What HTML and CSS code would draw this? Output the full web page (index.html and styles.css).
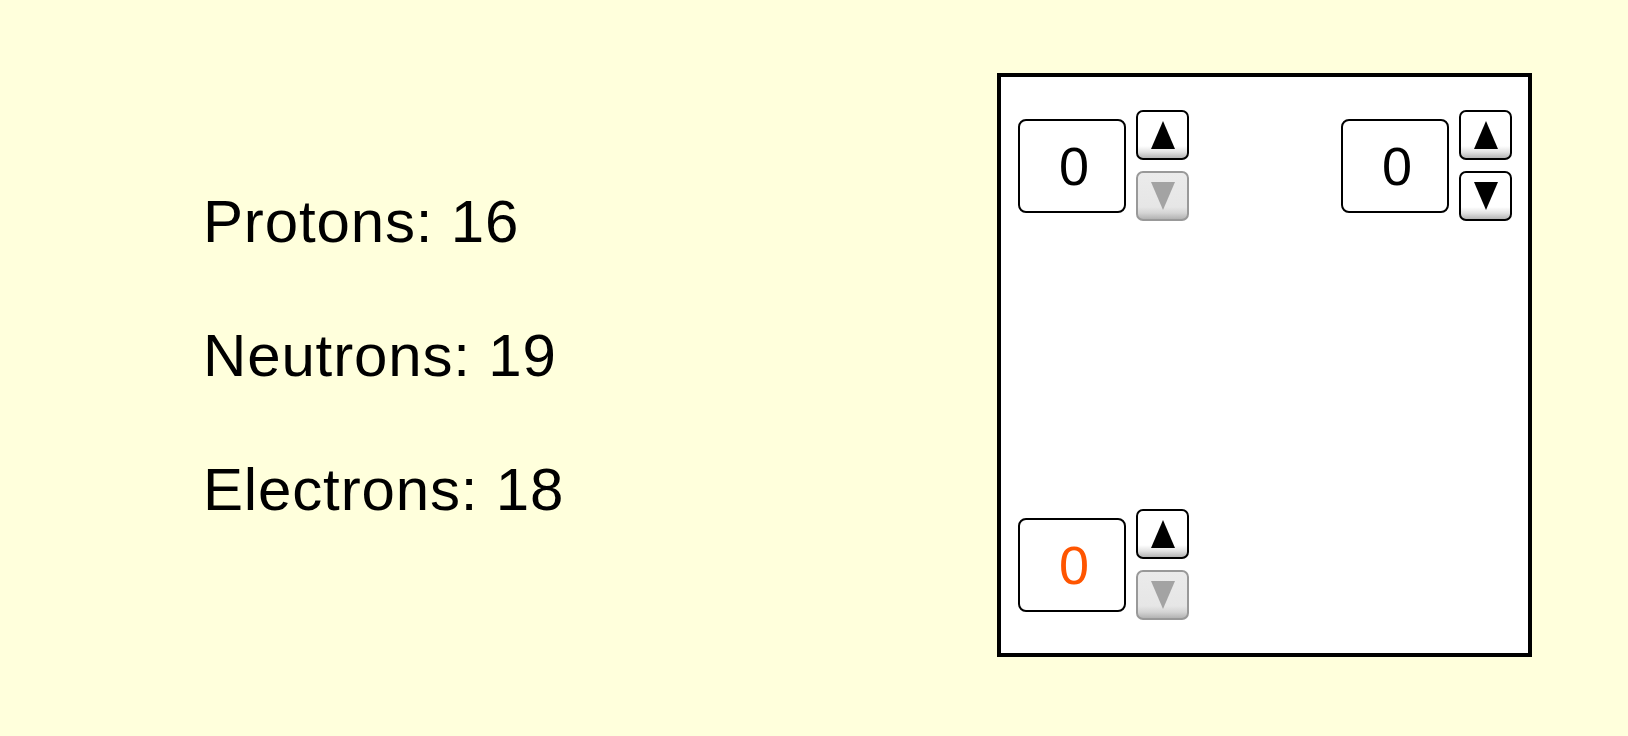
FILE: index.html
```html
<!DOCTYPE html>
<html lang="en">
<head>
<meta charset="utf-8">
<title>Atom counts</title>
<link rel="stylesheet" href="styles.css">
</head>
<body>
<main class="page">
  <section class="counts">
    <p class="count">Protons: 16</p>
    <p class="count">Neutrons: 19</p>
    <p class="count">Electrons: 18</p>
  </section>

  <section class="board">
    <div class="row row-top">
      <div class="spinner">
        <div class="value">0</div>
        <div class="arrows">
          <button class="arrow" type="button" aria-label="Increase">
            <svg viewBox="0 0 24 28" class="tri"><polygon points="12,0 24,28 0,28"/></svg>
          </button>
          <button class="arrow is-disabled" type="button" aria-label="Decrease" disabled>
            <svg viewBox="0 0 24 28" class="tri"><polygon points="0,0 24,0 12,28"/></svg>
          </button>
        </div>
      </div>

      <div class="spinner">
        <div class="value">0</div>
        <div class="arrows">
          <button class="arrow" type="button" aria-label="Increase">
            <svg viewBox="0 0 24 28" class="tri"><polygon points="12,0 24,28 0,28"/></svg>
          </button>
          <button class="arrow" type="button" aria-label="Decrease">
            <svg viewBox="0 0 24 28" class="tri"><polygon points="0,0 24,0 12,28"/></svg>
          </button>
        </div>
      </div>
    </div>

    <div class="row row-bottom">
      <div class="spinner">
        <div class="value value-charge">0</div>
        <div class="arrows">
          <button class="arrow" type="button" aria-label="Increase">
            <svg viewBox="0 0 24 28" class="tri"><polygon points="12,0 24,28 0,28"/></svg>
          </button>
          <button class="arrow is-disabled" type="button" aria-label="Decrease" disabled>
            <svg viewBox="0 0 24 28" class="tri"><polygon points="0,0 24,0 12,28"/></svg>
          </button>
        </div>
      </div>
    </div>
  </section>
</main>
</body>
</html>
```

FILE: styles.css
```css
html, body {
  margin: 0;
  padding: 0;
  background: #ffffdc;
  height: 100%;
}

body {
  font-family: "Liberation Sans", Arial, sans-serif;
  color: #000;
}

.page {
  display: flex;
  align-items: flex-start;
  padding: 73px 0 0 203px;
}

/* particle totals on the left */
.counts {
  width: 794px;
  margin-top: 82px;
  display: flex;
  flex-direction: column;
}

.count {
  margin: 0;
  font-size: 60px;
  letter-spacing: 0.85px;
  line-height: 134px;
  white-space: nowrap;
}

/* framed area holding the three number spinners */
.board {
  box-sizing: border-box;
  width: 535px;
  height: 584px;
  border: 4px solid #000;
  background: #fff;
  padding: 33px 16px 33px 17px;
  display: flex;
  flex-direction: column;
  justify-content: space-between;
}

.row {
  display: flex;
  justify-content: space-between;
}

.row-bottom {
  justify-content: flex-start;
}

.spinner {
  display: flex;
  align-items: center;
  gap: 10px;
}

.value {
  box-sizing: border-box;
  width: 108px;
  height: 94px;
  border: 2px solid #000;
  border-radius: 8px;
  background: #fff;
  display: flex;
  align-items: center;
  justify-content: center;
  font-size: 54px;
  line-height: 1;
  padding-left: 4px;
}

.value-charge {
  color: #ff5500;
}

.arrows {
  display: flex;
  flex-direction: column;
  gap: 11px;
}

.arrow {
  box-sizing: border-box;
  width: 53px;
  height: 50px;
  padding: 0;
  border: 2px solid #000;
  border-radius: 7px;
  background: linear-gradient(to bottom, #ffffff 0%, #ffffff 74%, #e2e2e2 87%, #b5b5b5 100%);
  display: flex;
  align-items: center;
  justify-content: center;
  cursor: pointer;
}

.tri {
  width: 24px;
  height: 28px;
  display: block;
  fill: #000;
}

.arrow.is-disabled {
  border-color: #999;
  background: linear-gradient(to bottom, #ebebeb 0%, #e6e6e6 74%, #d4d4d4 87%, #b3b3b3 100%);
  cursor: default;
}

.arrow.is-disabled .tri {
  fill: #a3a3a3;
}
```
